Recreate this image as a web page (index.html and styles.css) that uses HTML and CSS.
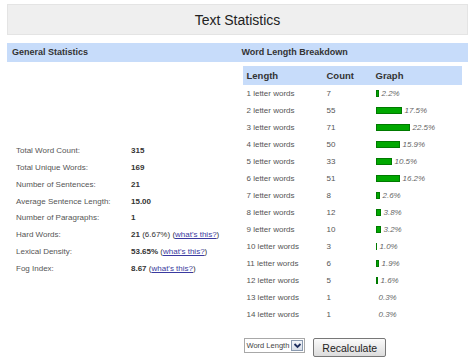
FILE: index.html
```html
<!DOCTYPE html>
<html lang="en">
<head>
  <meta charset="UTF-8" />
  <title>Text Statistics</title>
  <link rel="stylesheet" href="styles.css">
</head>
<body>
  <div class="page">
    <h1 class="title">Text Statistics</h1>

    <div class="sections">
      <div class="section-bar">
        <h2>General Statistics</h2>
        <h2>Word Length Breakdown</h2>
      </div>

      <div class="columns">
        <div class="general">
          <table class="stats">
            <tr><td>Total Word Count:</td><td class="val">315</td></tr>
            <tr><td>Total Unique Words:</td><td class="val">169</td></tr>
            <tr><td>Number of Sentences:</td><td class="val">21</td></tr>
            <tr><td>Average Sentence Length:</td><td class="val">15.00</td></tr>
            <tr><td>Number of Paragraphs:</td><td class="val">1</td></tr>
            <tr><td>Hard Words:</td><td class="val">21 <span class="light">(6.67%)</span> <span class="light">(<a href="#">what's this?</a>)</span></td></tr>
            <tr><td>Lexical Density:</td><td class="val">53.65% <span class="light">(<a href="#">what's this?</a>)</span></td></tr>
            <tr><td>Fog Index:</td><td class="val">8.67 <span class="light">(<a href="#">what's this?</a>)</span></td></tr>
          </table>
        </div>

        <div class="breakdown">
          <table class="lengths">
            <thead>
              <tr><th class="c-len">Length</th><th class="c-count">Count</th><th>Graph</th></tr>
            </thead>
            <tbody>
              <tr><td>1 letter words</td><td>7</td><td><span class="bar" style="width:3px"></span><em>2.2%</em></td></tr>
              <tr><td>2 letter words</td><td>55</td><td><span class="bar" style="width:26px"></span><em>17.5%</em></td></tr>
              <tr><td>3 letter words</td><td>71</td><td><span class="bar" style="width:34px"></span><em>22.5%</em></td></tr>
              <tr><td>4 letter words</td><td>50</td><td><span class="bar" style="width:24px"></span><em>15.9%</em></td></tr>
              <tr><td>5 letter words</td><td>33</td><td><span class="bar" style="width:16px"></span><em>10.5%</em></td></tr>
              <tr><td>6 letter words</td><td>51</td><td><span class="bar" style="width:24px"></span><em>16.2%</em></td></tr>
              <tr><td>7 letter words</td><td>8</td><td><span class="bar" style="width:4px"></span><em>2.6%</em></td></tr>
              <tr><td>8 letter words</td><td>12</td><td><span class="bar" style="width:5px"></span><em>3.8%</em></td></tr>
              <tr><td>9 letter words</td><td>10</td><td><span class="bar" style="width:5px"></span><em>3.2%</em></td></tr>
              <tr><td>10 letter words</td><td>3</td><td><span class="bar" style="width:1px"></span><em>1.0%</em></td></tr>
              <tr><td>11 letter words</td><td>6</td><td><span class="bar" style="width:3px"></span><em>1.9%</em></td></tr>
              <tr><td>12 letter words</td><td>5</td><td><span class="bar" style="width:2px"></span><em>1.6%</em></td></tr>
              <tr><td>13 letter words</td><td>1</td><td class="nobar"><em>0.3%</em></td></tr>
              <tr><td>14 letter words</td><td>1</td><td class="nobar"><em>0.3%</em></td></tr>
            </tbody>
          </table>

          <div class="controls">
            <div class="select">
              <span class="select-text">Word Length</span>
              <span class="select-arrow">
                <svg width="9" height="9" viewBox="0 0 9 9"><path d="M1.5 3 L4.5 6 L7.5 3" fill="none" stroke="#203060" stroke-width="1.8"/></svg>
              </span>
            </div>
            <button class="recalc">Recalculate</button>
          </div>
        </div>
      </div>
    </div>
  </div>
</body>
</html>
```

FILE: styles.css
```css
* {
  box-sizing: border-box;
}
body {
  margin: 0;
  background: #fff;
  font-family: 'Liberation Sans', Arial, sans-serif;
  color: #444;
}
.page {
  padding: 4px 6px 0 7px;
}
.title {
  margin: 0;
  height: 31px;
  line-height: 30px;
  background: #efefef;
  border: 1px solid #e4e4e4;
  text-align: center;
  font-size: 14px;
  font-weight: normal;
  color: #222;
}
.sections {
  margin-top: 8px;
}
.section-bar {
  display: flex;
  height: 19px;
  background: #c7dcfa;
}
.section-bar h2 {
  flex: 1;
  margin: 0;
  font-size: 9px;
  line-height: 19px;
  color: #333;
}
.section-bar h2:first-child {
  padding-left: 5px;
}
.section-bar h2:last-child {
  padding-left: 3px;
}
.columns {
  display: flex;
  align-items: center;
}
.general {
  flex: 1;
  padding-left: 7px;
}
.breakdown {
  flex: 1;
  padding: 4px 0 0 3px;
}
.stats {
  border-collapse: collapse;
  font-size: 8px;
}
.stats td {
  height: 16.8px;
  padding: 0 2px;
  color: #555;
}
.stats td:first-child {
  width: 115px;
}
.stats .val {
  color: #333;
  font-weight: bold;
}
.stats .light {
  font-weight: normal;
}
.stats a {
  color: #3a3aa0;
}
.lengths {
  width: 219px;
  border-collapse: collapse;
  font-size: 8px;
}
.lengths th {
  background: #c7dcfa;
  height: 19px;
  text-align: left;
  font-size: 9.5px;
  color: #333;
  padding: 0 4px;
}
.lengths .c-len {
  width: 80px;
}
.lengths .c-count {
  width: 49px;
}
.lengths td {
  height: 17px;
  padding: 0 4px;
  color: #555;
  white-space: nowrap;
}
.bar {
  display: inline-block;
  height: 7px;
  margin-right: 3px;
  vertical-align: -1px;
  background: #00a800;
  box-shadow: inset 0 0 0 1px #007a00;
}
.lengths em {
  color: #666;
}
.lengths .nobar {
  padding-left: 7px;
}
.controls {
  display: flex;
  align-items: flex-start;
  gap: 8px;
  margin-top: 15px;
  padding-left: 1px;
}
.select {
  display: flex;
  align-items: center;
  height: 15px;
  border: 1px solid #a8a8a8;
  background: #fff;
}
.select-text {
  font-size: 7.5px;
  color: #444;
  padding: 0 2px;
}
.select-arrow {
  display: flex;
  align-items: center;
  justify-content: center;
  width: 12px;
  height: 11px;
  margin-right: 1px;
  border: 1px solid #8a9ab0;
  background: linear-gradient(#f4f6fa, #d8dee8);
}
.recalc {
  height: 19px;
  padding: 0 8px;
  font-family: 'Liberation Sans', Arial, sans-serif;
  font-size: 10.5px;
  color: #222;
  border: 1px solid #777;
  border-radius: 2px;
  background: linear-gradient(#fbfbfb, #dcdcdc);
}
```
